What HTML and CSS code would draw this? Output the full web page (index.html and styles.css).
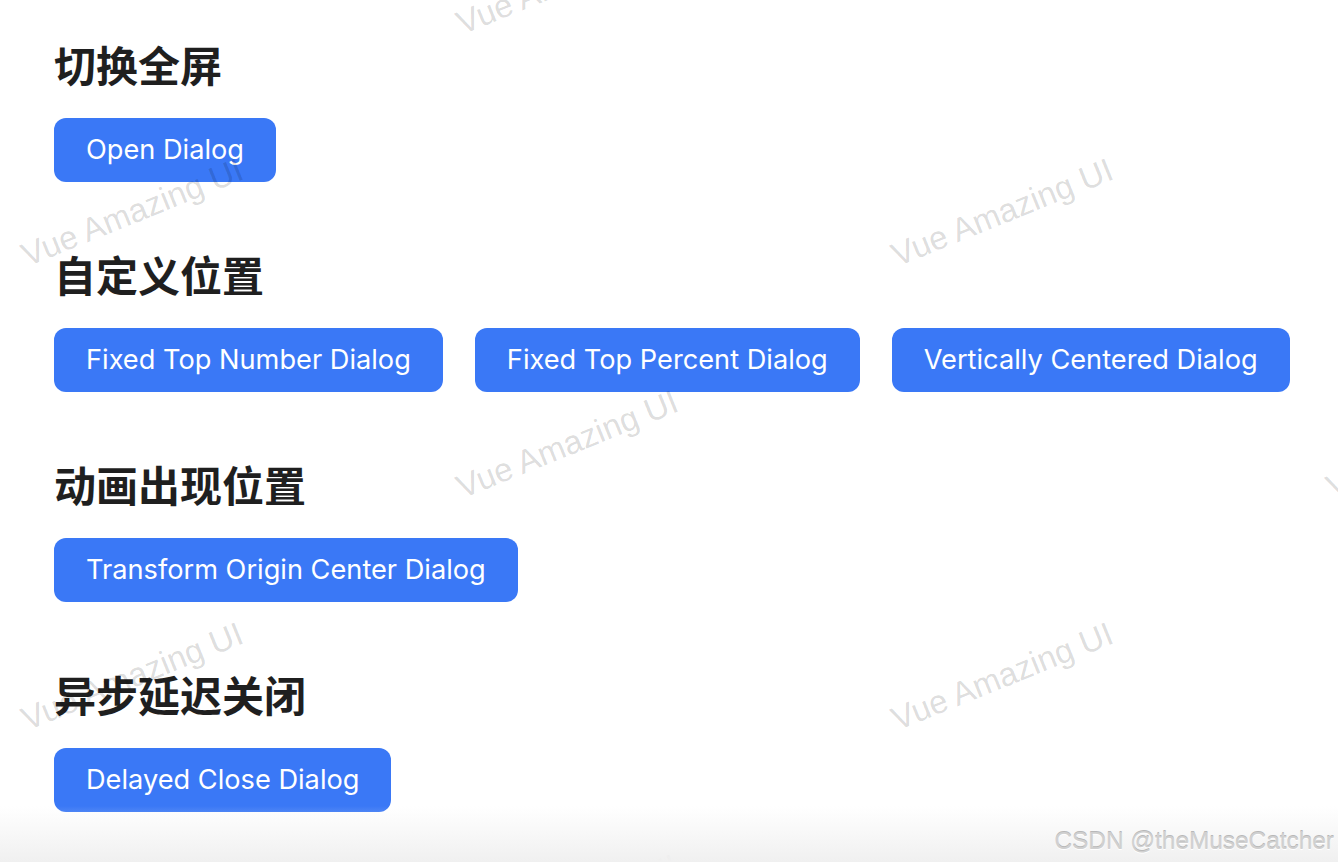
FILE: index.html
```html
<!DOCTYPE html>
<html lang="zh-CN">
<head>
<meta charset="utf-8">
<title>Dialog</title>
<link rel="stylesheet" href="styles.css">
</head>
<body>
<main class="page">
  <section class="demo">
    <h2 class="title">切换全屏</h2>
    <div class="btn-row">
      <button class="btn">Open Dialog</button>
    </div>
  </section>
  <section class="demo">
    <h2 class="title">自定义位置</h2>
    <div class="btn-row">
      <button class="btn">Fixed Top Number Dialog</button>
      <button class="btn">Fixed Top Percent Dialog</button>
      <button class="btn">Vertically Centered Dialog</button>
    </div>
  </section>
  <section class="demo">
    <h2 class="title">动画出现位置</h2>
    <div class="btn-row">
      <button class="btn">Transform Origin Center Dialog</button>
    </div>
  </section>
  <section class="demo">
    <h2 class="title">异步延迟关闭</h2>
    <div class="btn-row">
      <button class="btn">Delayed Close Dialog</button>
    </div>
  </section>
</main>

<div class="watermark" aria-hidden="true">
  <span class="wm" style="left:567px;top:-20px">Vue Amazing UI</span>
  <span class="wm" style="left:132px;top:212px">Vue Amazing UI</span>
  <span class="wm" style="left:1002px;top:212px">Vue Amazing UI</span>
  <span class="wm" style="left:567px;top:444px">Vue Amazing UI</span>
  <span class="wm" style="left:1437px;top:444px">Vue Amazing UI</span>
  <span class="wm" style="left:132px;top:676px">Vue Amazing UI</span>
  <span class="wm" style="left:1002px;top:676px">Vue Amazing UI</span>
  <span class="wm" style="left:567px;top:908px">Vue Amazing UI</span>
</div>

<div class="csdn">
  <span class="csdn-text">CSDN @theMuseCatcher</span>
</div>
</body>
</html>
```

FILE: styles.css
```css
html, body {
  margin: 0;
  padding: 0;
  background: #ffffff;
  height: 100%;
  overflow: hidden;
}

body {
  position: relative;
  font-family: Inter, "Noto Sans", "Noto Sans CJK SC", sans-serif;
}

.page {
  padding: 36px 0 0 54px;
}

.demo {
  margin-bottom: 64px;
}

.title {
  margin: 0 0 26px 0;
  font-family: "Noto Sans CJK SC", sans-serif;
  font-size: 42px;
  line-height: 56px;
  font-weight: 700;
  color: #1f1f1f;
}

.btn-row {
  display: flex;
  gap: 32px;
}

.btn {
  height: 64px;
  padding: 0 32px;
  border: none;
  border-radius: 12px;
  background: #3a78f6;
  color: #ffffff;
  font-family: Inter, "Noto Sans", sans-serif;
  font-size: 27.2px;
  line-height: 64px;
  cursor: pointer;
}

.watermark {
  position: absolute;
  inset: 0;
  pointer-events: none;
  overflow: hidden;
}

.wm {
  position: absolute;
  transform: translate(-50%, -50%) rotate(-22deg);
  font-family: "Liberation Sans", Arial, sans-serif;
  font-size: 33px;
  line-height: 33px;
  white-space: nowrap;
  color: rgba(0, 0, 0, 0.15);
}

.csdn {
  position: absolute;
  left: 0;
  right: 0;
  bottom: 0;
  height: 56px;
  background: linear-gradient(to bottom, rgba(238, 238, 238, 0) 0%, #f0f0f0 100%);
  display: flex;
  justify-content: flex-end;
  align-items: flex-end;
  padding: 0 4px 8px 0;
  box-sizing: border-box;
  pointer-events: none;
}

.csdn-text {
  font-family: "Liberation Sans", Arial, sans-serif;
  font-size: 24.4px;
  line-height: 26px;
  color: #d0d0d0;
  text-shadow: 0 1px 0 #ffffff, 0 -1px 0 #b8b8b8;
}
```
